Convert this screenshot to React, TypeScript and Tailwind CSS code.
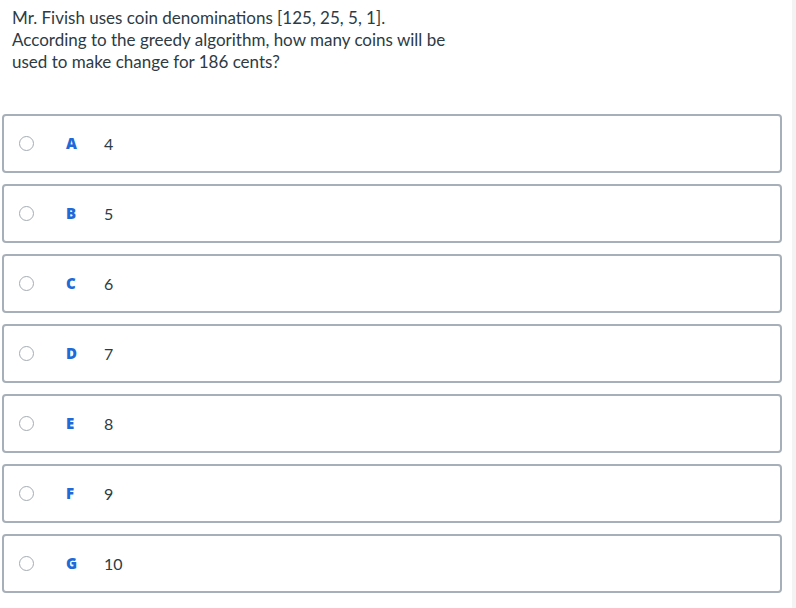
import React from "react";

const answers = [
  { key: "A", text: "4" },
  { key: "B", text: "5" },
  { key: "C", text: "6" },
  { key: "D", text: "7" },
  { key: "E", text: "8" },
  { key: "F", text: "9" },
  { key: "G", text: "10" },
];

export default function App() {
  return (
    <div className="flex min-h-[608px] w-[796px] bg-white">
      <div className="w-[792px]">
        <div
          className="pl-3 pt-[7px] text-[17px] leading-[22px] text-[#2d3b45]"
          style={{ fontFamily: "Lato, sans-serif" }}
        >
          <p>Mr. Fivish uses coin denominations [125, 25, 5, 1].</p>
          <p>According to the greedy algorithm, how many coins will be</p>
          <p>used to make change for 186 cents?</p>
        </div>

        <div className="mt-[41px] flex flex-col gap-[11px] pl-[2px]">
          {answers.map((a) => (
            <div
              key={a.key}
              className="flex h-[59px] w-[780px] items-center rounded-[4px] border-2 border-[#a7afb8] bg-white"
            >
              <span className="ml-[15px] h-[15px] w-[15px] rounded-full border-[1.5px] border-[#a3abb3]" />
              <span
                className="ml-[32px] w-[38px] text-[15px] font-extrabold text-[#2169d6]"
                style={{ fontFamily: "'Open Sans', sans-serif" }}
              >
                {a.key}
              </span>
              <span
                className="text-[16px] text-[#2d3b45]"
                style={{ fontFamily: "Lato, sans-serif" }}
              >
                {a.text}
              </span>
            </div>
          ))}
        </div>
      </div>
      <div className="w-[4px] bg-[#f3f3f3]" />
    </div>
  );
}
